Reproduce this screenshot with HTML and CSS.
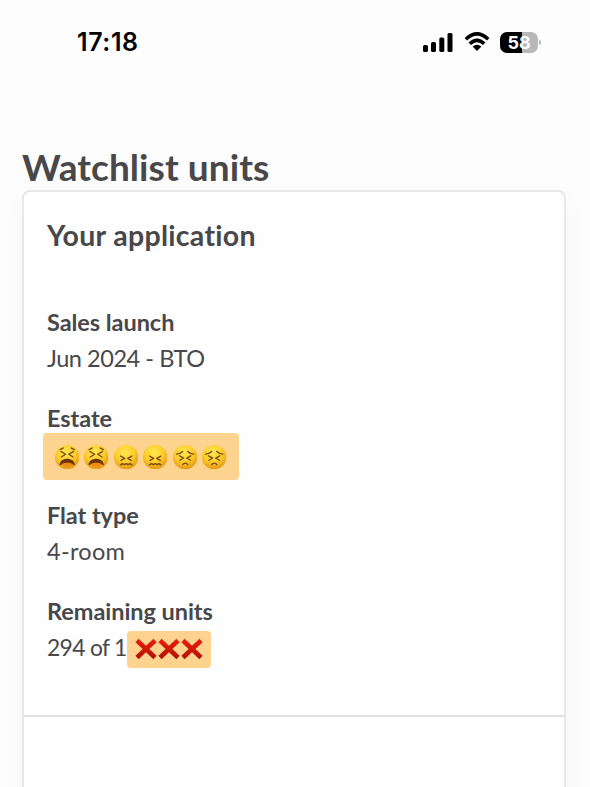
FILE: index.html
```
<!DOCTYPE html>
<html lang="en">
<head>
<meta charset="utf-8">
<title>Watchlist units</title>
<link rel="stylesheet" href="styles.css">
</head>
<body>
<svg class="defs" aria-hidden="true">
  <defs>
    <radialGradient id="face" cx="45%" cy="30%" r="72%">
      <stop offset="0" stop-color="#ffe850"/><stop offset=".55" stop-color="#fccb2c"/><stop offset="1" stop-color="#df9412"/>
    </radialGradient>
    <linearGradient id="red" x1="0" y1="0" x2="0" y2="1">
      <stop offset="0" stop-color="#e91c0c"/><stop offset="1" stop-color="#b61204"/>
    </linearGradient>
    <symbol id="tired" viewBox="0 0 24 24">
      <circle cx="12" cy="12" r="12" fill="url(#face)"/>
      <path d="M6 6.500l4.500 2.600-4.300 2.700M18 6.500l-4.500 2.600 4.300 2.700M5 4.500l3-1.500M19 4.500L16 3" class="ink"/>
      <path d="M4.500 20c0-8.500 15-8.500 15 0-2-1.500-13-1.500-15 0z" fill="#6a3408"/>
      <path d="M6 19.500c2-2.600 10-2.600 12 0-2 3-10 3-12 0z" fill="#ef8b17"/>
    </symbol>
    <symbol id="confounded" viewBox="0 0 24 24">
      <circle cx="12" cy="12" r="12" fill="url(#face)"/>
      <path d="M6.500 11l4 2.200L7 15.200M17.500 11l-4 2.200 3.500 2M6.500 19.500l1.800-1.200 1.900 1 1.800-1 1.800 1 1.900-1 1.800 1.200" class="ink"/>
    </symbol>
    <symbol id="persevere" viewBox="0 0 24 24">
      <circle cx="12" cy="12" r="12" fill="url(#face)"/>
      <path d="M6.500 10.700l4 2.100-3.700 2.200M17.500 10.700l-4 2.100 3.700 2.200M3.500 9C6 9 8 8 9.500 6.500M20.500 9c-2.500 0-4.500-1-6-2.500M9.500 19.200c1.300-1.800 3.700-1.800 5 0" class="ink"/>
    </symbol>
    <symbol id="cross" viewBox="0 0 22 22">
      <path d="M2 2.500L20 19.500M20 2.500L2 19.500" fill="none" stroke="url(#red)" stroke-width="4.600"/>
    </symbol>
  </defs>
</svg>
<header class="status">
  <span class="time">17:18</span>
  <div class="indicators">
    <svg class="signal" viewBox="0 0 30 20">
      <rect x="0" y="13" width="5" height="7" rx="1.600"/><rect x="8" y="10" width="5" height="10" rx="1.600"/><rect x="16.300" y="5.500" width="5" height="14.500" rx="1.600"/><rect x="24.500" y="1" width="5" height="19" rx="1.600"/>
    </svg>
    <svg class="wifi" viewBox="0 0 26 20">
      <path d="M1.800 7.200Q13-3.500 24.200 7.200M5.800 11.800Q13 4.800 20.200 11.800" fill="none" stroke="#000" stroke-width="3.500"/>
      <path d="M8.600 14.600Q13 11 17.400 14.600L13 19z"/>
    </svg>
    <div class="battery"><span class="level">58</span><span class="tip"></span></div>
  </div>
</header>
<main>
  <h1>Watchlist units</h1>
  <section class="card">
    <div class="details">
      <h2>Your application</h2>
      <dl>
        <div class="row"><dt>Sales launch</dt><dd class="date">Jun 2024 - BTO</dd></div>
        <div class="row"><dt>Estate</dt><dd><span class="mask faces">
          <svg><use href="#tired"/></svg><svg><use href="#tired"/></svg><svg><use href="#confounded"/></svg><svg><use href="#confounded"/></svg><svg><use href="#persevere"/></svg><svg><use href="#persevere"/></svg>
        </span></dd></div>
        <div class="row"><dt>Flat type</dt><dd class="room">4-room</dd></div>
        <div class="row"><dt>Remaining units</dt><dd><span class="number">294 of 1</span><span class="mask crosses">
          <svg><use href="#cross"/></svg><svg><use href="#cross"/></svg><svg><use href="#cross"/></svg>
        </span></dd></div>
      </dl>
    </div>
  </section>
</main>
</body>
</html>
```
FILE: styles.css
```
* { box-sizing: border-box; margin: 0; }
body { height: 787px; overflow: hidden; background: #fdfdfd; color: #48484a; font-family: Lato, sans-serif; }
svg { display: block; flex: none; }
.defs { position: absolute; width: 0; height: 0; }
.ink { fill: none; stroke: #7c4b10; stroke-width: 1.400; stroke-linecap: round; stroke-linejoin: round; }
.status { display: flex; justify-content: space-between; align-items: center; height: 84px; padding: 0 49px 0 77px; }
.time { color: #000; font: 600 25px/30px Inter, sans-serif; letter-spacing: .6px; }
.indicators { display: flex; align-items: center; }
.signal { width: 30px; height: 20px; margin-right: 11px; }
.wifi { width: 26px; height: 20px; margin-right: 10px; }
.battery { display: flex; align-items: center; width: 41px; }
.level { width: 38px; height: 21px; border-radius: 7px; background: linear-gradient(90deg, #000 57%, #b8b8b8 57%); color: #fff; font: 700 18px/21px Inter, sans-serif; text-align: center; }
.tip { width: 2px; height: 5px; margin-left: 1px; border-radius: 0 2px 2px 0; background: #b8b8b8; }
main { padding: 59px 24px 0 22px; }
h1 { height: 47px; font-size: 37px; line-height: 47px; font-weight: 700; letter-spacing: .08px; white-space: nowrap; }
.card { height: 620px; border: 2px solid #e8e8ea; border-radius: 8px; background: #fefefe; box-shadow: 0 8px 24px rgba(0,0,0,.035); }
.details { height: 525px; padding: 23px 23px 0; border-bottom: 2px solid #e0e0e2; }
h2 { height: 41px; font-size: 28.500px; line-height: 40px; font-weight: 700; letter-spacing: .3px; }
dl { display: grid; gap: 24.400px; margin-top: 48px; }
.row { height: 72px; font-size: 23.500px; line-height: 36px; white-space: nowrap; }
dt { font-weight: 700; letter-spacing: -.05px; }
dd { display: flex; align-items: center; height: 36px; }
.date { letter-spacing: -.45px; }
.room { letter-spacing: .3px; }
.mask { display: flex; align-items: center; flex: none; background: #fed28f; border-radius: 4px; }
.faces { width: 196px; height: 47px; margin: 5px 0 0 -4px; padding-left: 12px; gap: 5px; }
.faces svg { width: 24.400px; height: 24.400px; }
.number { width: 80px; font-size: 22.800px; letter-spacing: -.65px; }
.crosses { width: 84px; height: 37px; margin-top: 4px; padding-left: 8px; gap: 1px; }
.crosses svg { width: 22px; height: 22px; }
```
